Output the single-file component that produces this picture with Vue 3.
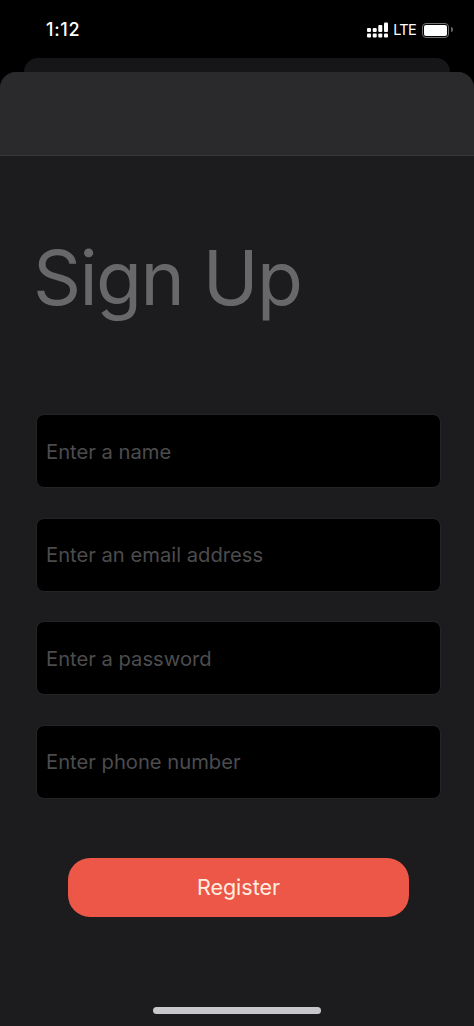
<template>
  <div class="screen">
    <div class="status-bar">
      <span class="time">1:12</span>
      <div class="status-icons">
        <svg class="signal" width="21" height="16" viewBox="0 0 21 16">
          <g fill="#fff">
            <rect x="0" y="6" width="4" height="4" rx="1" />
            <rect x="0" y="11.5" width="4" height="4" rx="1" />
            <rect x="5.7" y="6" width="4" height="4" rx="1" />
            <rect x="5.7" y="11.5" width="4" height="4" rx="1" />
            <rect x="11.3" y="3" width="4" height="7" rx="1" />
            <rect x="11.3" y="11.5" width="4" height="4" rx="1" />
            <rect x="17" y="0.5" width="4" height="9.5" rx="1" />
            <rect x="17" y="11.5" width="4" height="4" rx="1" />
          </g>
        </svg>
        <span class="lte">LTE</span>
        <div class="battery">
          <div class="battery-fill"></div>
        </div>
      </div>
    </div>

    <div class="stack">
      <div class="back-card"></div>
      <div class="sheet">
        <div class="sheet-header"></div>
        <div class="sheet-body">
          <h1 class="title">Sign Up</h1>
          <div class="fields">
            <div v-for="item in fields" :key="item" class="field">{{ item }}</div>
          </div>
          <button class="register">Register</button>
          <div class="home-bar"></div>
        </div>
      </div>
    </div>
  </div>
</template>

<script setup>
const fields = [
  'Enter a name',
  'Enter an email address',
  'Enter a password',
  'Enter phone number'
]
</script>

<style>
html, body {
  margin: 0;
  background: #000;
}
</style>

<style scoped>
.screen {
  width: 474px;
  height: 1026px;
  background: #000;
  overflow: hidden;
  font-family: Inter, "Liberation Sans", sans-serif;
  display: flex;
  flex-direction: column;
}

.status-bar {
  height: 58px;
  flex: none;
  display: flex;
  justify-content: space-between;
  align-items: flex-start;
  color: #fff;
  box-sizing: border-box;
  padding: 20px 25px 0 46px;
}

.time {
  font-size: 18px;
  font-weight: 500;
  line-height: 20px;
  letter-spacing: 0.7px;
}

.status-icons {
  display: flex;
  align-items: center;
  gap: 5px;
  height: 20px;
}

.lte {
  font-size: 14.5px;
  font-weight: 400;
  line-height: 20px;
  letter-spacing: -0.7px;
}

.battery {
  width: 27px;
  height: 15px;
  box-sizing: border-box;
  border: 1.5px solid #707070;
  border-radius: 4px;
  padding: 1px;
  margin-left: 1px;
  position: relative;
}

.battery::after {
  content: "";
  position: absolute;
  right: -4.5px;
  top: 3.5px;
  width: 1.5px;
  height: 5px;
  border-radius: 0 2px 2px 0;
  background: #666;
}

.battery-fill {
  height: 100%;
  background: #fff;
  border-radius: 2px;
}

.stack {
  flex: 1;
  display: flex;
  flex-direction: column;
  min-height: 0;
}

.back-card {
  height: 14px;
  flex: none;
  margin: 0 24px;
  background: #161618;
  border-radius: 14px 14px 0 0;
}

.sheet {
  flex: 1;
  display: flex;
  flex-direction: column;
  background: #1c1c1e;
  border-radius: 16px 16px 0 0;
  overflow: hidden;
}

.sheet-header {
  height: 83px;
  flex: none;
  background: #2a2a2c;
  border-bottom: 1px solid #39393b;
}

.sheet-body {
  flex: 1;
  display: flex;
  flex-direction: column;
  padding: 0 33px 0 36px;
}

.title {
  margin: 76px 0 0 -3px;
  font-size: 75px;
  font-weight: 400;
  line-height: 92px;
  letter-spacing: -1.6px;
  color: #68686b;
  height: 92px;
  white-space: nowrap;
}

.fields {
  margin-top: 90px;
  display: flex;
  flex-direction: column;
  gap: 29.67px;
}

.field {
  height: 74px;
  box-sizing: border-box;
  background: #000;
  border: 1px solid #242426;
  border-radius: 8px;
  padding-left: 9px;
  display: flex;
  align-items: center;
  font-size: 20.2px;
  color: #4c4c4e;
}

.register {
  display: block;
  margin: 59px 32px 0;
  height: 59px;
  border: none;
  border-radius: 22px;
  background: #ec5748;
  color: #fdeee0;
  font-family: inherit;
  font-size: 21.5px;
  font-weight: 400;
}

.home-bar {
  align-self: center;
  margin: 90px 0 0 -3px;
  width: 168px;
  height: 7px;
  border-radius: 4px;
  background: #c7c7cc;
}
</style>
